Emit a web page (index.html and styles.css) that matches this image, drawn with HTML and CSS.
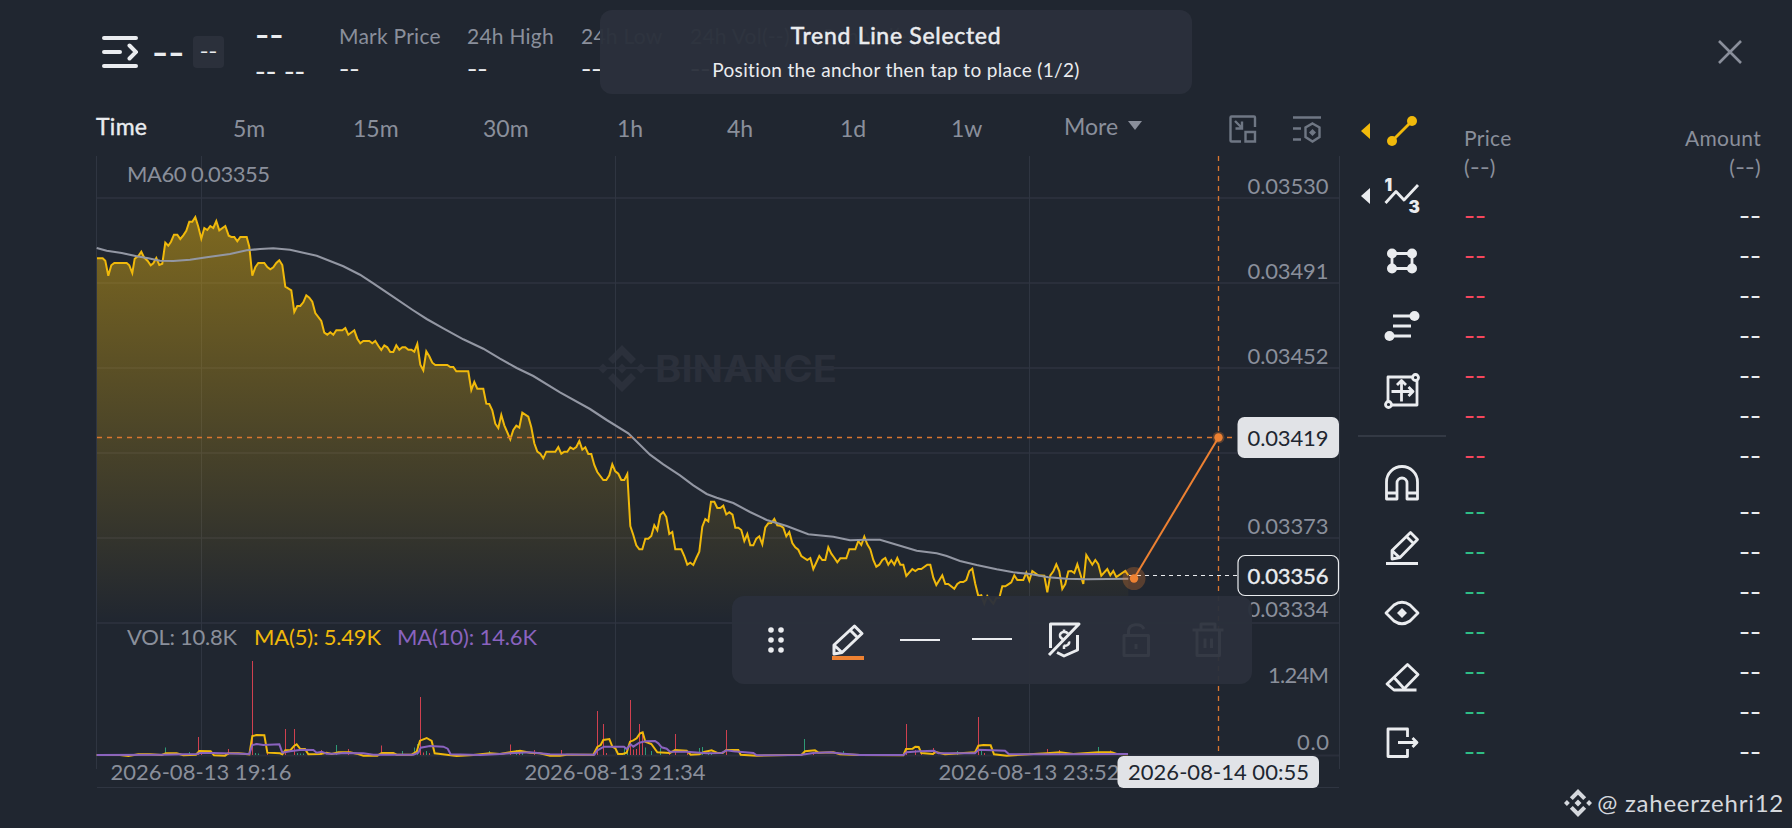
FILE: index.html
```html
<!DOCTYPE html>
<html lang="en">
<head>
    <meta charset="UTF-8" />
    <meta name="viewport" content="width=device-width, initial-scale=1" />
    <title>Trading Chart</title>
    <link rel="stylesheet" href="styles.css">
</head>
<body>
<header class="topbar">
    <svg class="menu-icon" width="36" height="34" viewBox="0 0 36 34">
        <path d="M2 3H34M2 17H18M2 31H34M27.5 10.5L34 17L27.5 23.5" />
    </svg>
    <span class="dash pair">--</span>
    <span class="dash badge">--</span>
    <div class="last-price">
        <span class="dash price">--</span>
        <span class="dash change">-- --</span>
    </div>
    <div class="stat stat-mark"><span class="label">Mark Price</span><span class="dash">--</span></div>
    <div class="stat stat-high"><span class="label">24h High</span><span class="dash">--</span></div>
    <div class="stat stat-low"><span class="label">24h Low</span><span class="dash">--</span></div>
    <div class="stat stat-vol"><span class="label">24h Vol(--)</span><span class="dash">--</span></div>
    <div class="stat"><span class="label">24h Vol(--)</span></div>
    <svg class="close-icon" width="26" height="26" viewBox="0 0 26 26"><path d="M2 2L24 24M24 2L2 24" /></svg>
</header>

<main class="content">
    <section class="chart-panel">
        <nav class="tabs">
            <span class="tab active">Time</span>
            <span class="tab">5m</span>
            <span class="tab">15m</span>
            <span class="tab">30m</span>
            <span class="tab">1h</span>
            <span class="tab">4h</span>
            <span class="tab">1d</span>
            <span class="tab">1w</span>
            <span class="tab more">More <i class="caret"></i></span>
            <svg class="tab-icon" width="28" height="28" viewBox="0 0 28 28">
                <path d="M26 12V2.5Q26 1.5 25 1.5H2.5Q1.5 1.5 1.5 2.5V25.5Q1.5 26.5 2.5 26.5H12M6 6L13 13M13 6.5V13.500H6.500M16.500 17H26V26.500H16.500Z" />
            </svg>
            <svg class="tab-icon" width="28" height="28" viewBox="0 0 28 28">
                <path d="M0 2.500H28M0 13.500H8M0 24.500H8M19.500 8.500L26.500 12.500V22L19.500 26.500L12.500 22V12.500Z" />
                <path class="solid" d="M19.500 14L23 17.500L19.500 21L16 17.500Z" />
            </svg>
        </nav>

        <svg class="chart" width="1245" height="634" viewBox="96 156 1245 634">
            <defs>
                <linearGradient id="areaFill" gradientUnits="userSpaceOnUse" x1="0" y1="217" x2="0" y2="623">
                    <stop offset="0" stop-color="#f0b90b" stop-opacity=".45" />
                    <stop offset="1" stop-color="#f0b90b" stop-opacity="0" />
                </linearGradient>
            </defs>

            <!-- watermark -->
            <g class="watermark">
                <path d="M622 345L636 359L631 364L622 355L613 364L608 359ZM622 392L636 378L631 373L622 382L613 373L608 378ZM603 363.500L608 368.500L603 373.500L598 368.500ZM641 363.500L646 368.500L641 373.500L636 368.500ZM622 363.500L627 368.500L622 373.500L617 368.500Z" />
                <text x="655" y="382" textLength="182" lengthAdjust="spacingAndGlyphs">BINANCE</text>
            </g>

            <!-- grid -->
            <path class="grid-h" d="M97 198H1339M97 283H1339M97 368H1339M97 453H1339M97 538H1339M97 623H1339M97 755.500H1339" />
            <path class="grid-v" d="M96.500 156V769M201.500 156V755M615.500 156V755M1029.500 156V755M1339.500 156V769M97 787.500H1339" />

            <!-- price -->
            <polygon class="area" id="priceArea" />
            <polyline class="price-line" id="priceLine" points="97,258.3 102.7,258.3 105.3,260.7 108.3,275.7 111.3,265.3 114.3,263 126.7,263 129.3,265.3 132.3,273 134.7,258.7 138.3,256 141.3,251.7 144,257.3 147.7,261 150.7,265.3 153.3,263.3 156.3,258 159.3,265 162.3,263.7 165.3,242.7 168.3,245.7 171,241.7 174,234.7 177.3,234.7 180.3,239 183.3,235.3 186.3,230.7 189.3,221.7 192.3,221.7 195.3,217 198.3,226.7 201.3,238.7 204.3,228 207.3,230 210.3,226 213.3,228 216.3,221 219.3,230.3 225.3,226 228.7,235.7 231.3,237 234.3,237 237.3,241.3 240.3,237 246.7,237 249.3,246.7 252.3,275.7 255.3,267.3 258.3,263 264.3,263 267.3,267 270.3,269.3 273.3,267.3 276.3,263 279.3,260.3 282.3,265 285.3,286.7 291.3,290.3 294.3,312 297.3,306 300.3,306 303.3,302.3 306.3,295.3 309.3,297.7 312.3,301.7 315.3,313 321.3,321 324.3,332.7 327.3,334.7 330.3,332.3 333.3,334.7 336.3,330.3 342.3,330.3 345.3,328 348.3,334.7 354.3,330.3 357.3,338.7 360.3,343.3 363.3,341 369.3,341 372.3,343.3 375.3,341 378.3,345.7 381.3,350 384.3,345.3 387.3,347.3 390.3,352 393.3,352 396.3,345.3 399.3,349.7 402.3,347.3 405.3,347.3 408.3,349.7 411.3,349.7 414.3,351.7 417.3,344 420.3,364.7 423.3,370.3 426.3,351.3 429.3,356.3 432.3,362.7 435.3,365 447.3,365 450.3,367 453.3,367 456.3,371.3 468.3,371.3 471.3,390 474.3,382 477.3,388.7 483.3,388.7 486.3,403.7 489.3,404 492.3,410.3 495.3,423.7 498.3,428 501.3,415 504.3,425.3 510.3,439.3 513.3,430 516.3,425.7 519.3,427.7 522.3,412.7 528.3,416.7 531.3,427.3 534.3,443.3 537.3,451.7 540.3,453.7 543.3,458.3 546.3,451.7 555.3,451.7 558.3,447 561.3,453.7 564.3,451.7 567.3,451.7 570.3,447.3 573.3,449 576.3,447 579.3,441 582.3,449.7 585.3,447.3 588.3,454 591.3,454 594.3,465 597.3,472 603.3,480 606.3,480 609.3,475.3 612.3,464.3 615.3,471.3 618.3,473.7 621.3,480 624.3,480 627.3,474 630.3,526 633.3,535 636.3,545.3 639.3,549.3 642.3,549.3 645.3,538.7 648.3,538.7 651.3,536 654.3,525.3 657.3,530.3 660.3,514.7 663.3,512 666.3,517 669.3,534 672.3,532 675.3,549.3 681.3,549.3 684.3,556 687.3,564.7 690.3,562.7 693.3,565 696.3,558 699.3,551.7 702.3,526.7 705.3,519 708.3,521.3 711,501.7 714.3,501.7 717.3,508 720.3,508 723.3,505.7 726.3,514.5 729.3,512.3 732.5,514.7 735.3,527.7 738.3,527.7 741.3,530 744.3,541 747.3,534 750.3,545.3 753.3,545.3 756.3,538.7 759.3,536.3 762.3,544.3 765.3,527.3 768.3,523.3 771.3,523 774.3,519 777.3,525.3 780.3,525.7 783.3,527.7 786.3,536.3 789.3,532 792.3,543 795.3,547.3 798.3,549.7 801.3,556 807.3,560 810.3,558 813.3,569 819.3,556 822.3,560 825.3,560 828.3,547.3 831.3,553.7 834.3,557.7 837.3,562.3 840.3,558.3 846.3,558.3 849.3,549.3 855.3,549.3 858.3,541 861.3,545 864.3,536.7 867.3,544.3 870.3,549.3 873.3,560 876.3,566.7 879.3,564.7 882.3,560 885.3,558 888.3,564.7 891.3,560.3 894.3,564.7 897.3,558 900.3,564.7 903.3,564.7 906.3,576 912.3,569 915.3,571 918.3,569 921.3,569 927.3,564.7 930.3,564.7 933.3,577.7 936.3,585 942.3,575.3 945.3,584 948.3,584 954.3,588.7 957.3,584 960.3,582 963.3,582 966.3,580 969.3,571 972.3,568.7 975.3,584 978.3,596 981.3,595.3 984.3,603.7 987.3,596 990.3,600 993.3,603.7 996.3,598 999.3,598 1002.3,586.3 1005.3,586.3 1008.3,584.3 1011.3,582.3 1014.3,575.3 1017.3,580 1023.3,580 1026.3,572.7 1029.3,580.7 1032.3,571 1038.3,575.3 1044.3,575.7 1047.3,592.3 1050.3,575.3 1053.3,571.3 1056.3,564.3 1059.3,571.3 1062.3,589 1065.3,584 1068.3,571.3 1071.3,571 1074.3,573 1077.3,564.3 1080.3,574 1083.3,584 1086.3,555 1092.3,564.7 1095.3,560 1098.3,564.3 1101.3,575.7 1107.3,569 1110.3,575.3 1113.3,571 1116.3,577 1125.3,571 1128.3,575.3" />
            <polyline class="ma-line" points="96.7,248 106.7,250.7 121.7,253 136.7,256.3 148.3,258.3 160,260.7 173.3,261 190,259.7 206.7,257.3 230,254 246.7,250.3 260,249 273.3,248.3 290,249.7 303.3,252.7 316.7,255.7 330,261 343.3,266.3 360,274.7 373.3,283.3 390,294.7 412.7,310 426.7,319 443.3,328.3 463.3,339.3 483.3,348.7 500,358.7 516.7,368 533.3,376 560,392.3 590,409 606.7,420 628.3,433.3 650,454.7 663.3,464.3 680,475.3 693.3,485.3 706.7,494 716.7,497.7 733.3,503 750,512 766.7,520 786.7,526 808.3,534.3 833.3,536.7 850,540.3 866.7,539.7 880,539.7 896.7,544.7 916.7,550.7 936.7,553.3 946.7,556 960,561 976.7,565 996.7,569.3 1013.3,572.3 1030,574 1048.3,577.3 1066.7,578.7 1086.7,579.3 1128.3,578.7" />

            <!-- volume -->
            <path class="bar-down" d="M198.500 755V737M201.500 755V753M228.500 755V749M252.500 755V661M267.500 755V752M285.500 755V729M294.500 755V729M321.500 755V750M348.500 755V749M381.500 755V745.500M420.500 755V697M423.500 755V752.500M429.500 755V753M510.500 755V744.500M519.500 755V753M534.500 755V750M561.500 755V750M597.500 755V711M603.500 755V724M606.500 755V753M630.500 755V700M633.500 755V749.500M636.500 755V749M639.500 755V724M642.500 755V732.500M669.500 755V752M675.500 755V734M687.500 755V753M726.500 755V730M813.500 755V753M906.500 755V724M915.500 755V750M921.500 755V752M933.500 755V748M978.500 755V717M984.500 755V753M1047.500 755V749M1059.500 755V750M1110.500 755V750.500" />
            <path class="bar-up" d="M165.500 755V747.500M189.500 755V752M255.500 755V753M258.500 755V753.500M297.500 755V753M300.500 755V753.500M303.500 755V753.500M336.500 755V745M402.500 755V751M414.500 755V747.500M417.500 755V744M426.500 755V751M489.500 755V751M516.500 755V750M522.500 755V753M624.500 755V747M627.500 755V751.500M645.500 755V747.500M651.500 755V751M660.500 755V748M699.500 755V748M702.500 755V747M708.500 755V753M711.500 755V753M804.500 755V739M843.500 755V751M957.500 755V751M981.500 755V750.500M1050.500 755V752M1098.500 755V747" />
            <g transform="translate(90 610) scale(.33333)">
                <polyline class="vol-ma5" points="20,435 90,435 115,438 145,433 180,433 215,435 228,430 260,430 280,436 318,434 328,423 362,424 372,436 405,437 415,430 445,430 478,433 487,378 500,375 523,376 532,428 570,430 577,433 586,421 602,420 613,407 620,403 631,417 645,417 655,433 690,432 710,428 725,432 745,427 780,427 800,431 820,437 862,437 875,429 910,429 920,434 965,434 980,425 990,392 1010,384 1025,393 1034,430 1070,434 1100,438 1150,435 1200,430 1230,432 1260,427 1290,422 1320,428 1350,430 1380,437 1410,437 1430,434 1510,434 1522,411 1532,405 1540,390 1558,387 1567,410 1576,415 1584,432 1598,432 1610,428 1620,395 1630,391 1640,385 1650,370 1658,367 1666,395 1684,402 1702,427 1740,429 1755,420 1790,422 1802,434 1828,433 1842,426 1865,421 1882,429 1898,429 1909,420 1945,420 1952,434 2000,437 2135,434 2145,424 2175,421 2185,428 2230,427 2250,433 2310,435 2440,436 2448,417 2468,416 2476,410 2486,411 2494,429 2528,432 2538,426 2565,433 2655,427 2665,407 2680,405 2702,406 2712,433 2750,437 2870,430 2910,427 2950,432 3025,427 3065,427 3080,432 3114,433" />
                <polyline class="vol-ma10" points="20,435 215,434 320,432 330,429 370,429 478,432 487,405 500,402 520,405 568,403 577,428 600,424 635,419 670,420 680,428 695,425 710,431 740,431 760,429 820,430 850,434 970,434 985,428 992,413 1020,408 1060,410 1073,416 1082,433 1170,435 1230,432 1260,430 1320,427 1350,430 1380,433 1513,434 1522,421 1542,410 1602,410 1610,417 1622,403 1630,410 1648,398 1666,394 1695,393 1705,400 1715,412 1730,416 1740,425 1790,425 1850,430 1895,429 1910,421 1930,424 1990,429 2000,436 2130,435 2170,429 2220,427 2260,431 2310,435 2440,435 2450,427 2490,424 2532,422 2545,430 2655,430 2666,419 2745,422 2757,433 2910,433 3114,432" />
            </g>

            <!-- legends -->
            <text class="txt" x="127" y="182" textLength="143">MA60 0.03355</text>
            <text class="txt" x="127" y="645" textLength="110">VOL: 10.8K</text>
            <text class="txt ma5" x="254" y="645" textLength="127">MA(5): 5.49K</text>
            <text class="txt ma10" x="397" y="645" textLength="140">MA(10): 14.6K</text>

            <!-- axis labels -->
            <text class="txt" x="1247.500" y="194" textLength="81">0.03530</text>
            <text class="txt" x="1247.500" y="279" textLength="81">0.03491</text>
            <text class="txt" x="1247.500" y="364" textLength="81">0.03452</text>
            <text class="txt" x="1247.500" y="534" textLength="81">0.03373</text>
            <text class="txt" x="1247.500" y="617" textLength="81">0.03334</text>
            <text class="txt" x="1268" y="683" textLength="61">1.24M</text>
            <text class="txt" x="1297" y="750" textLength="32">0.0</text>
            <text class="txt" x="110.500" y="780" textLength="181">2026-08-13 19:16</text>
            <text class="txt" x="524.500" y="780" textLength="181">2026-08-13 21:34</text>
            <text class="txt" x="938.500" y="780" textLength="181">2026-08-13 23:52</text>

            <!-- crosshair and trend line -->
            <path class="cross" d="M97 437.500H1237M1218.500 156V755" />
            <path class="last" d="M1129 575.500H1237" />
            <path class="trend" d="M1134 578.500L1218.500 437.500" />
            <circle class="halo" cx="1134" cy="578.500" r="11.500" />
            <circle class="anchor" cx="1134" cy="578.500" r="4.200" />
            <circle class="halo" cx="1218.500" cy="437.500" r="6" />
            <circle class="anchor" cx="1218.500" cy="437.500" r="4.200" />

            <rect class="tag" x="1237.500" y="417" width="101.500" height="41" rx="7" />
            <text class="txt dark" x="1247.500" y="446" textLength="81">0.03419</text>
            <rect class="tag-outline" x="1238" y="555.500" width="100.500" height="40" rx="7" />
            <text class="txt bright" x="1247.500" y="584" textLength="81">0.03356</text>
            <rect class="tag" x="1117.500" y="756" width="201.500" height="32" rx="6" />
            <text class="txt dark" x="1128" y="780" textLength="181">2026-08-14 00:55</text>
        </svg>
    </section>

    <aside class="tools">
        <div class="tool current">
            <i class="arrow"></i>
            <svg width="36" height="36" viewBox="0 0 36 36"><path d="M8 28L28 8" /><circle cx="8" cy="28" r="5" /><circle cx="28" cy="8" r="5" /></svg>
        </div>
        <div class="tool">
            <i class="arrow"></i>
            <svg width="36" height="36" viewBox="0 0 36 36"><path d="M1.500 25L12 13.500L20 22L34 7" /><text x="0.500" y="13">1</text><text x="24.500" y="35">3</text></svg>
        </div>
        <div class="tool">
            <svg width="36" height="36" viewBox="0 0 36 36"><path d="M8 10.500H28V25.500H8Z" /><circle cx="8" cy="10.500" r="5" /><circle cx="28" cy="10.500" r="5" /><circle cx="8" cy="25.500" r="5" /><circle cx="28" cy="25.500" r="5" /></svg>
        </div>
        <div class="tool">
            <svg width="36" height="36" viewBox="0 0 36 36"><path d="M9 8H30M9 18H27M6 28H27" /><circle cx="30.500" cy="8" r="5" /><circle cx="5.500" cy="28" r="5" /></svg>
        </div>
        <div class="tool">
            <svg width="36" height="36" viewBox="0 0 36 36"><path d="M28 4H4V28M8 32H33V7M17.500 28.500V8M13 12L17.500 7.500L22 12M7.500 18.500H28.500M24.500 14L29 18.500L24.500 23" /><circle class="ring" cx="31.500" cy="4.500" r="3" /><circle class="ring" cx="4.500" cy="31.500" r="3" /></svg>
        </div>
        <div class="divider"></div>
        <div class="tool">
            <svg width="36" height="36" viewBox="0 0 36 36"><path d="M2.500 34V17A15.500 15.500 0 0 1 33.500 17V34H23V18A5 5 0 0 0 13 18V34ZM2.500 28H13M23 28H33.500" /></svg>
        </div>
        <div class="tool">
            <svg width="36" height="36" viewBox="0 0 36 36"><path d="M8 29V20.500L26.500 2.500L33.500 9.500L16 27.500ZM22.500 6.500L29.500 13.500M8.500 21L15.500 27.500M2 33.500H34" /></svg>
        </div>
        <div class="tool">
            <svg width="36" height="36" viewBox="0 0 36 36"><path d="M2 18L10 10Q18 4.500 26 10L34 18L26 26Q18 31.500 10 26Z" /><path class="fill" d="M18 13L23 18L18 23L13 18Z" /></svg>
        </div>
        <div class="tool">
            <svg width="36" height="36" viewBox="0 0 36 36"><path d="M23.500 4.500L34 14.500L19 30H10L3 24ZM10 17.500L20.500 29M10 30H32.500" /></svg>
        </div>
        <div class="tool">
            <svg width="36" height="36" viewBox="0 0 36 36"><path d="M23.500 12V4H4V31.500H23.500V24M14 17.500H33M28.500 13L33 17.500L28.500 22" /></svg>
        </div>
    </aside>

    <section class="book">
        <div class="book-head"><span>Price</span><span>Amount</span></div>
        <div class="book-head unit"><span>(<b class="dash">--</b>)</span><span>(<b class="dash">--</b>)</span></div>
        <div class="asks">
            <div class="row dash"><span class="ask">--</span><span>--</span></div>
            <div class="row dash"><span class="ask">--</span><span>--</span></div>
            <div class="row dash"><span class="ask">--</span><span>--</span></div>
            <div class="row dash"><span class="ask">--</span><span>--</span></div>
            <div class="row dash"><span class="ask">--</span><span>--</span></div>
            <div class="row dash"><span class="ask">--</span><span>--</span></div>
            <div class="row dash"><span class="ask">--</span><span>--</span></div>
        </div>
        <div class="bids">
            <div class="row dash"><span class="bid">--</span><span>--</span></div>
            <div class="row dash"><span class="bid">--</span><span>--</span></div>
            <div class="row dash"><span class="bid">--</span><span>--</span></div>
            <div class="row dash"><span class="bid">--</span><span>--</span></div>
            <div class="row dash"><span class="bid">--</span><span>--</span></div>
            <div class="row dash"><span class="bid">--</span><span>--</span></div>
            <div class="row dash"><span class="bid">--</span><span>--</span></div>
        </div>
    </section>
</main>

<div class="toast">
    <strong>Trend Line Selected</strong>
    <span>Position the anchor then tap to place (1/2)</span>
</div>

<div class="draw-bar">
    <svg width="520" height="88" viewBox="732 596 520 88">
        <g class="dots">
            <circle cx="771" cy="630" r="2.800" /><circle cx="781" cy="630" r="2.800" />
            <circle cx="771" cy="640" r="2.800" /><circle cx="781" cy="640" r="2.800" />
            <circle cx="771" cy="650" r="2.800" /><circle cx="781" cy="650" r="2.800" />
        </g>
        <path class="ico" d="M834 654V645L854.500 626L862 633.500L842 652.500ZM850 630L857.500 637.500M834.500 645.500L842 652.500" />
        <rect class="ink" x="832" y="656" width="32" height="4" />
        <path class="rule" d="M900 640H940M972 639H1012" />
        <path class="ico" d="M1050.500 648V624H1079L1049 655M1077.500 635V650L1064 656L1057 652.500" />
        <path class="ico thin" d="M1068 633.500C1065 630.500 1059.500 632 1060 636C1060.500 639 1063 639 1064 639.500M1064 629.500V632.500M1069 641.500C1070 644.500 1066 646.500 1063.500 645.500M1064 645.500V649" />
        <path class="ico faded" d="M1124 635.500H1148.500V655.500H1124ZM1128.500 635.500V631C1129 623.500 1141 622.500 1144 629M1136 644V649M1192.500 630H1223.500M1197 631V655.500H1219.500V631M1201 630V624H1215V630M1205 638.500V648M1211.500 638.500V648" />
    </svg>
</div>

<div class="credit">
    <svg width="28" height="28" viewBox="0 0 48 48"><path d="M24 0L38 14L33 19L24 10L15 19L10 14ZM24 48L38 34L33 29L24 38L15 29L10 34ZM5 19L10 24L5 29L0 24ZM43 19L48 24L43 29L38 24ZM24 18L30 24L24 30L18 24Z" /></svg>
    <span>@ zaheerzehri12</span>
</div>

<script>
    // Close the price line down to the chart floor for the gradient area
    const line = document.getElementById('priceLine').getAttribute('points');
    document.getElementById('priceArea').setAttribute('points', line + ' 1128.3,623 97,623');
</script>
</body>
</html>
```
FILE: styles.css
```css
/* Base */
* {
    box-sizing: border-box;
}
body {
    margin: 0;
    width: 1792px;
    height: 828px;
    overflow: hidden;
    position: relative;
    background: #202630;
    color: #eaecef;
    font-family: Lato, "Open Sans", sans-serif;
    font-size: 22px;
}
svg {
    display: block;
    fill: none;
}
.dash {
    font-family: Inter, sans-serif;
    font-weight: 400;
}

/* Top bar */
.topbar {
    display: flex;
    align-items: center;
    height: 104px;
    padding-left: 102px;
}
.menu-icon {
    stroke: #eaecef;
    stroke-width: 4;
    stroke-linecap: round;
}
.topbar .pair {
    width: 55px;
    padding-left: 14px;
    font-size: 35px;
    font-weight: 500;
    line-height: 30px;
    white-space: nowrap;
}
.topbar .badge {
    width: 31px;
    height: 32px;
    line-height: 31px;
    border-radius: 4px;
    background: #2b303b;
    font-size: 19px;
    text-align: center;
}
.last-price,
.stat {
    display: flex;
    flex-direction: column;
    height: 80px;
    white-space: nowrap;
}
.last-price {
    width: 84px;
    margin-left: 31px;
}
.last-price .price {
    height: 34px;
    line-height: 46px;
    font-size: 31px;
    font-weight: 500;
}
.last-price .change {
    line-height: 52px;
    font-size: 23px;
    font-weight: 500;
    word-spacing: 1.5px;
}
.stat .label {
    color: #8a8f9b;
    font-size: 21px;
    line-height: 48px;
    height: 46px;
    letter-spacing: .25px;
}
.stat .dash {
    line-height: 21px;
    font-size: 22.5px;
}
.stat-mark { width: 128px; }
.stat-high { width: 114px; }
.stat-low { width: 109px; }
.stat-vol { width: 132px; }
.close-icon {
    margin-left: auto;
    margin-right: 49px;
    stroke: #8a8f9b;
    stroke-width: 2.6;
}

/* Layout */
.content {
    display: flex;
    padding-left: 96px;
}
.chart-panel {
    width: 1245px;
}

/* Interval tabs */
.tabs {
    display: grid;
    grid-template-columns: 137px 120px 130px 134px 110px 113px 111px 113px 165px 64px 28px;
    align-items: center;
    height: 52px;
    padding-bottom: 3px;
    color: #8a8f9b;
    font-size: 23px;
}
.tab {
    padding-bottom: 2px;
}
.tab.active {
    color: #eaecef;
    padding-bottom: 6px;
    letter-spacing: .3px;
    -webkit-text-stroke: .4px #eaecef;
}
.more {
    display: flex;
    align-items: center;
    gap: 10px;
    padding-bottom: 6px;
}
.caret {
    border: 7px solid transparent;
    border-top: 9px solid #8a8f9b;
    border-bottom: 0;
}
.tab-icon {
    stroke: #6f7784;
    stroke-width: 2.4;
}
.tab-icon .solid {
    fill: #6f7784;
    stroke: none;
}

/* Chart */
.watermark {
    fill: #2b303b;
    font-family: Inter, sans-serif;
    font-size: 37px;
    font-weight: 700;
}
.grid-h {
    stroke: #2a2f3b;
    stroke-width: 2;
}
.grid-v {
    stroke: #2f3541;
}
.area {
    fill: url(#areaFill);
}
.price-line {
    stroke: #f0b90b;
    stroke-width: 2;
}
.ma-line {
    stroke: #9397a3;
    stroke-width: 2.1;
}
.bar-down {
    stroke: #d0404f;
}
.bar-up {
    stroke: #2e9a76;
}
.vol-ma5 {
    stroke: #f0b90b;
    stroke-width: 6;
}
.vol-ma10 {
    stroke: #8a63bf;
    stroke-width: 6;
}
.txt {
    fill: #8a8f9b;
    font-size: 22px;
}
.txt.ma5 { fill: #f0b90b; }
.txt.ma10 { fill: #8a63bf; }
.txt.dark { fill: #202630; }
.txt.bright {
    fill: #eaecef;
    stroke: #eaecef;
    stroke-width: .4px;
}
.cross {
    stroke: #d9762f;
    stroke-width: 1.3;
    stroke-dasharray: 5 5;
}
.last {
    stroke: #eaecef;
    stroke-width: 1.2;
    stroke-dasharray: 4 4;
}
.trend {
    stroke: #ed8132;
    stroke-width: 2;
}
.halo {
    fill: #ed8132;
    opacity: .28;
}
.anchor {
    fill: #ed8132;
}
.tag {
    fill: #e1e3e7;
}
.tag-outline {
    fill: #202630;
    stroke: #eaecef;
    stroke-width: 1.2;
}

/* Drawing tools */
.tools {
    display: flex;
    flex-direction: column;
    width: 123px;
    padding-left: 17px;
    margin-top: -6px;
}
.tool {
    display: flex;
    align-items: center;
    justify-content: flex-end;
    gap: 14px;
    width: 62px;
    height: 65.2px;
    color: #eaecef;
}
.tool.current {
    color: #f0b90b;
}
.arrow {
    border: 8px solid transparent;
    border-right: 9px solid currentColor;
    border-left: 0;
}
.tool svg {
    stroke: currentColor;
    stroke-width: 2.8;
    stroke-linejoin: round;
    overflow: visible;
}
.tool circle,
.tool .fill {
    fill: currentColor;
    stroke: none;
}
.tool .ring {
    fill: none;
    stroke: currentColor;
}
.tool text {
    fill: currentColor;
    stroke: none;
    font-family: Inter, sans-serif;
    font-size: 17px;
    font-weight: 900;
}
.divider {
    width: 88px;
    height: 2px;
    margin: 11px 0 13px;
    background: #333944;
}

/* Order book */
.book {
    width: 297px;
}
.book-head,
.row {
    display: flex;
    justify-content: space-between;
}
.book-head {
    height: 30px;
    margin-top: 20px;
    color: #8a8f9b;
    font-size: 21px;
    line-height: 28px;
    letter-spacing: .3px;
}
.book-head.unit {
    margin-top: 0;
    height: 42px;
    line-height: 26px;
}
.row {
    height: 40px;
    line-height: 40px;
    font-size: 24px;
}
.bids {
    margin-top: 16px;
}
.ask { color: #f6465d; }
.bid { color: #2ebd85; }

/* Overlays */
.toast {
    position: absolute;
    left: 600px;
    top: 10px;
    width: 592px;
    height: 84px;
    padding-top: 10px;
    border-radius: 12px;
    background: rgba(43, 48, 59, .96);
    display: flex;
    flex-direction: column;
    align-items: center;
}
.toast strong {
    font-size: 23px;
    font-weight: 400;
    line-height: 30px;
    letter-spacing: .7px;
    -webkit-text-stroke: .5px #eaecef;
}
.toast span {
    margin-top: 7px;
    font-size: 19px;
    line-height: 26px;
    letter-spacing: .35px;
}
.draw-bar {
    position: absolute;
    left: 732px;
    top: 596px;
    width: 520px;
    height: 88px;
    border-radius: 12px;
    background: rgba(43, 48, 59, .96);
}
.dots {
    fill: #eaecef;
}
.ico {
    stroke: #eaecef;
    stroke-width: 3;
    stroke-linejoin: round;
}
.ico.thin {
    stroke-width: 2.5;
}
.ico.faded {
    stroke: #353a45;
}
.ink {
    fill: #ed8132;
}
.rule {
    stroke: #eaecef;
    stroke-width: 2;
}
.credit {
    position: absolute;
    right: 8px;
    bottom: 11px;
    display: flex;
    align-items: center;
    gap: 5px;
    color: #d5d8dd;
    font-size: 24px;
    letter-spacing: .75px;
}
.credit svg {
    fill: #d5d8dd;
}
```
